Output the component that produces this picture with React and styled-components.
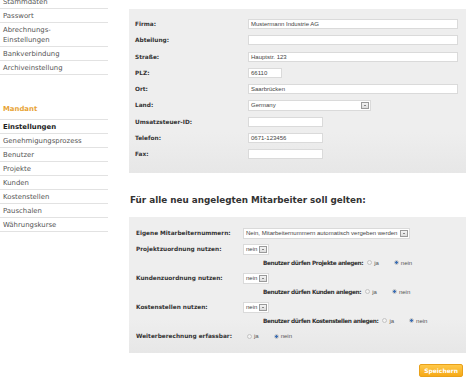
import React from "react";
import styled, { createGlobalStyle } from "styled-components";

const GlobalStyle = createGlobalStyle`
  html, body {
    margin: 0;
    padding: 0;
    background: #fff;
  }
  body {
    font-family: "DejaVu Sans", Verdana, sans-serif;
    color: #333;
    overflow: hidden;
  }
`;

const accountItems = ["Stammdaten", "Passwort", "Abrechnungs-\nEinstellungen", "Bankverbindung", "Archiveinstellung"];
const clientItems = [
  "Einstellungen",
  "Genehmigungsprozess",
  "Benutzer",
  "Projekte",
  "Kunden",
  "Kostenstellen",
  "Pauschalen",
  "Währungskurse",
];

const companyFields = [
  { label: "Firma:", value: "Mustermann Industrie AG", width: 210 },
  { label: "Abteilung:", value: "", width: 210 },
  { label: "Straße:", value: "Hauptstr. 123", width: 210 },
  { label: "PLZ:", value: "66110", width: 34 },
  { label: "Ort:", value: "Saarbrücken", width: 210 },
  { label: "Land:", value: "Germany", width: 123, select: true },
  { label: "Umsatzsteuer-ID:", value: "", width: 75 },
  { label: "Telefon:", value: "0671-123456", width: 75 },
  { label: "Fax:", value: "", width: 75 },
];

const groups = [
  { label: "Projektzuordnung nutzen:", sub: "Benutzer dürfen Projekte anlegen:" },
  { label: "Kundenzuordnung nutzen:", sub: "Benutzer dürfen Kunden anlegen:" },
  { label: "Kostenstellen nutzen:", sub: "Benutzer dürfen Kostenstellen anlegen:" },
];

const Select = ({ value, width }) => (
  <SelectBox style={{ width }}>
    <SelectText>{value}</SelectText>
    <Arrow />
  </SelectBox>
);

const RadioPair = () => (
  <Radios>
    <RadioOption>
      <Radio />
      ja
    </RadioOption>
    <RadioOption>
      <Radio $checked />
      nein
    </RadioOption>
  </Radios>
);

const App = () => {
  return (
    <>
      <GlobalStyle />
      <Page>
        <Sidebar>
          {accountItems.map((item) => (
            <NavItem key={item}>{item}</NavItem>
          ))}
          <NavHeading>Mandant</NavHeading>
          {clientItems.map((item, i) => (
            <NavItem key={item} $active={i === 0}>
              {item}
            </NavItem>
          ))}
        </Sidebar>

        <Main>
          <Panel>
            <FieldList>
              {companyFields.map((f) => (
                <FieldRow key={f.label}>
                  <Label>{f.label}</Label>
                  {f.select ? (
                    <Select value={f.value} width={f.width} />
                  ) : (
                    <Input style={{ width: f.width }}>{f.value}</Input>
                  )}
                </FieldRow>
              ))}
            </FieldList>
          </Panel>

          <Heading>Für alle neu angelegten Mitarbeiter soll gelten:</Heading>

          <Panel $second>
            <OptionRow>
              <OptionLabel>Eigene Mitarbeiternummern:</OptionLabel>
              <Select value="Nein, Mitarbeiternummern automatisch vergeben werden" width={167} />
            </OptionRow>
            {groups.map((g) => (
              <Group key={g.label}>
                <OptionRow>
                  <OptionLabel>{g.label}</OptionLabel>
                  <Select value="nein" width={26} />
                </OptionRow>
                <SubRow>
                  <SubLabel>{g.sub}</SubLabel>
                  <RadioPair />
                </SubRow>
              </Group>
            ))}
            <Group>
              <OptionRow>
                <OptionLabel>Weiterberechnung erfassbar:</OptionLabel>
                <RadioPair />
              </OptionRow>
            </Group>
          </Panel>

          <Actions>
            <SaveButton>Speichern</SaveButton>
          </Actions>
        </Main>
      </Page>
    </>
  );
};

export default App;

const Page = styled.div`
  display: flex;
  align-items: flex-start;
  width: 470px;
  height: 380px;
`;

const Sidebar = styled.nav`
  width: 108px;
  margin-top: -5px;
  flex-shrink: 0;
`;

const NavItem = styled.div`
  padding: 1.5px 3px;
  font-size: 6.9px;
  line-height: 10px;
  white-space: pre-line;
  color: ${(p) => (p.$active ? "#222" : "#555")};
  font-weight: ${(p) => (p.$active ? "bold" : "normal")};
  border-bottom: 1px solid #e2e2e2;
`;

const NavHeading = styled.div`
  margin-top: 29px;
  padding: 0 3px 5px;
  font-size: 6.9px;
  line-height: 10px;
  font-weight: bold;
  color: #e8a336;
  border-bottom: 1px solid #e2e2e2;
`;

const Main = styled.main`
  margin-left: 21px;
  padding-top: 9px;
  width: 337px;
`;

const Panel = styled.section`
  background: linear-gradient(#eeeeee 0%, #eeeeee 75%, #e7e7e7 100%);
  padding: ${(p) => (p.$second ? "9px 0 10px 7px" : "7px 0 11px 6px")};
`;

const FieldList = styled.div`
  display: grid;
  grid-auto-rows: 16.25px;
`;

const FieldRow = styled.div`
  display: flex;
  align-items: center;
`;

const Label = styled.div`
  width: 113px;
  font-size: 5.8px;
  font-weight: bold;
  color: #333;
`;

const Input = styled.div`
  box-sizing: border-box;
  height: 10px;
  padding-left: 2px;
  background: #fff;
  border: 1px solid #dadada;
  font-family: "Liberation Sans", Arial, sans-serif;
  font-size: 6px;
  line-height: 8px;
  color: #444;
  white-space: nowrap;
  overflow: hidden;
`;

const SelectBox = styled.div`
  box-sizing: border-box;
  display: flex;
  align-items: center;
  justify-content: space-between;
  height: 11px;
  padding: 0 1px 0 2px;
  background: #fff;
  border: 1px solid #dadada;
`;

const SelectText = styled.span`
  font-family: "Liberation Sans", Arial, sans-serif;
  font-size: 6px;
  line-height: 8px;
  color: #444;
  white-space: nowrap;
`;

const Arrow = styled.span`
  position: relative;
  box-sizing: border-box;
  flex-shrink: 0;
  width: 8px;
  height: 7px;
  margin-left: 2px;
  background: linear-gradient(#f4f4f4, #dcdcdc);
  border: 1px solid #9a9a9a;

  &::after {
    content: "";
    position: absolute;
    left: 1.5px;
    top: 2px;
    border-left: 1.5px solid transparent;
    border-right: 1.5px solid transparent;
    border-top: 1.5px solid #222;
  }
`;

const Heading = styled.h2`
  margin: 21px 0 11px 1px;
  font-size: 8.8px;
  line-height: 12px;
  font-weight: bold;
  color: #333;
`;

const Group = styled.div`
  margin-top: 2px;
`;

const OptionRow = styled.div`
  display: flex;
  align-items: center;
  height: 14px;
`;

const SubRow = styled.div`
  display: flex;
  align-items: center;
  height: 13px;
  padding-left: 127px;
`;

const OptionLabel = styled.div`
  width: 107px;
  flex-shrink: 0;
  font-size: 5.8px;
  font-weight: bold;
  color: #333;
  white-space: nowrap;
`;

const SubLabel = styled.span`
  font-size: 5.8px;
  font-weight: bold;
  letter-spacing: -0.4px;
  color: #333;
  white-space: nowrap;
`;

const Radios = styled.div`
  display: flex;
  align-items: center;
  gap: 15px;
  margin-left: 4px;
`;

const RadioOption = styled.label`
  display: flex;
  align-items: center;
  gap: 2px;
  font-family: "Liberation Sans", Arial, sans-serif;
  font-size: 6px;
  color: #555;
`;

const Radio = styled.span`
  box-sizing: border-box;
  width: 5px;
  height: 5px;
  border-radius: 50%;
  border: 1px solid #c4c4c4;
  background: ${(p) =>
    p.$checked ? "radial-gradient(circle, #3a6db4 0 1.2px, #dfe6ef 1.6px)" : "#f2f2f2"};
`;

const Actions = styled.div`
  display: flex;
  justify-content: flex-end;
  margin-top: 11px;
  padding-right: 3px;
`;

const SaveButton = styled.button`
  height: 13px;
  padding: 0 4px;
  border: 1px solid #e9a11a;
  border-radius: 2px;
  background: linear-gradient(#ffc94a, #f6a917);
  font-family: "DejaVu Sans", Verdana, sans-serif;
  font-size: 6px;
  font-weight: bold;
  color: #fff;
  cursor: pointer;
`;
